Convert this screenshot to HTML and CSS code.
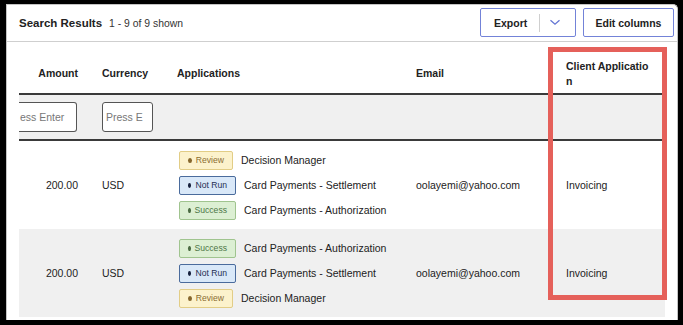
FILE: index.html
```html
<!DOCTYPE html>
<html>
<head>
<meta charset="utf-8">
<link rel="stylesheet" href="styles.css">
</head>
<body>
<div class="card">
  <div class="toolbar">
    <div class="title">
      <span class="title-main">Search Results</span>
      <span class="count">1 - 9 of 9 shown</span>
    </div>
    <div class="actions">
      <div class="btn btn-split">
        <span>Export</span>
        <span class="divider"></span>
        <svg class="chev" width="12" height="7" viewBox="0 0 12 7"><path d="M1.5 1.2 L6 5.2 L10.5 1.2" fill="none" stroke="#6476d4" stroke-width="1.3"/></svg>
      </div>
      <div class="btn btn-edit">Edit columns</div>
    </div>
  </div>
  <div class="table">
    <div class="row head">
      <div class="cell num">Amount</div>
      <div class="cell">Currency</div>
      <div class="cell">Applications</div>
      <div class="cell">Email</div>
      <div class="cell wrap">Client Application</div>
    </div>
    <div class="row filters">
      <div class="cell num"><div class="finput clipped"><span class="ftext">ess Enter</span></div></div>
      <div class="cell"><div class="finput"><span class="ftext">Press E</span></div></div>
      <div class="cell"></div>
      <div class="cell"></div>
      <div class="cell"></div>
    </div>
    <div class="row data">
      <div class="cell num">200.00</div>
      <div class="cell">USD</div>
      <div class="cell apps">
        <div class="app"><span class="badge review"><i></i>Review</span><span class="app-name">Decision Manager</span></div>
        <div class="app"><span class="badge notrun"><i></i>Not Run</span><span class="app-name">Card Payments - Settlement</span></div>
        <div class="app"><span class="badge success"><i></i>Success</span><span class="app-name">Card Payments - Authorization</span></div>
      </div>
      <div class="cell">oolayemi@yahoo.com</div>
      <div class="cell">Invoicing</div>
    </div>
    <div class="row data alt">
      <div class="cell num">200.00</div>
      <div class="cell">USD</div>
      <div class="cell apps">
        <div class="app"><span class="badge success"><i></i>Success</span><span class="app-name">Card Payments - Authorization</span></div>
        <div class="app"><span class="badge notrun"><i></i>Not Run</span><span class="app-name">Card Payments - Settlement</span></div>
        <div class="app"><span class="badge review"><i></i>Review</span><span class="app-name">Decision Manager</span></div>
      </div>
      <div class="cell">oolayemi@yahoo.com</div>
      <div class="cell">Invoicing</div>
    </div>
  </div>
  <div class="highlight"></div>
</div>
</body>
</html>
```

FILE: styles.css
```css
* { box-sizing: border-box; }
html, body { margin: 0; padding: 0; }
body {
  background: #000;
  width: 683px;
  height: 325px;
  overflow: hidden;
  padding: 4px 5px 0 6px;
  font-family: "Liberation Sans", Arial, sans-serif;
  color: #222;
}
.card {
  position: relative;
  background: #fff;
  height: 316px;
  border: 1px solid #c4c4c4;
  border-bottom: none;
  border-top-right-radius: 5px;
  overflow: hidden;
}
.toolbar {
  height: 37px;
  border-bottom: 1px solid #cfcfcf;
  display: flex;
  align-items: center;
  justify-content: space-between;
  padding: 0 3px 1px 12px;
}
.title { display: flex; align-items: baseline; gap: 7px; }
.title-main { font-weight: bold; font-size: 11.5px; }
.count { font-size: 10.4px; color: #333; }
.actions { display: flex; gap: 7px; }
.btn {
  height: 29px;
  border: 1px solid #7383d8;
  border-radius: 2px;
  background: #fff;
  font-weight: bold;
  font-size: 10.5px;
  display: flex;
  align-items: center;
}
.btn-split { width: 96px; padding-left: 13px; }
.divider { width: 1px; height: 18px; background: #cfcfcf; margin-left: 12px; }
.chev { margin-left: 9px; }
.btn-edit { width: 91px; justify-content: center; }

.table {
  margin-left: 12px;
  width: 646px;
  overflow: hidden;
}
.row {
  display: grid;
  grid-template-columns: 73px 75px 239px 150px 109px;
  align-items: center;
}
.cell { padding-left: 10px; font-size: 10.5px; }
.cell.num { padding-left: 0; padding-right: 14px; text-align: right; }
.head {
  height: 53px;
  padding-top: 12px;
  border-bottom: 2px solid #3a3a3a;
  font-weight: bold;
}
.head .cell { line-height: 15px; }
.head .wrap { width: 97px; word-break: break-all; }
.filters {
  height: 46px;
  background: #f0f0f0;
  border-bottom: 2px solid #3a3a3a;
  padding-bottom: 1px;
}
.filters .cell.num { padding-right: 15px; display: flex; justify-content: flex-end; }
.finput {
  height: 30px;
  width: 51px;
  border: 1px solid #555;
  border-radius: 3px;
  background: #fff;
  display: flex;
  align-items: center;
  padding-left: 3px;
  font-size: 10.5px;
  color: #777;
}
.finput.clipped {
  width: 58px;
  border-left: none;
  border-radius: 0 3px 3px 0;
  padding-left: 1px;
}
.ftext { white-space: nowrap; display: block; }

.data { height: 88px; }
.alt { background: #f0f0f0; }
.apps { display: flex; flex-direction: column; gap: 6px; padding-left: 12px; }
.app { display: flex; align-items: center; gap: 8px; white-space: nowrap; }
.badge {
  height: 19px;
  border: 1px solid;
  border-radius: 2px;
  font-size: 8.6px;
  display: flex;
  align-items: center;
  padding: 0 8px 0 8px;
}
.badge i {
  width: 5px; height: 5px; border-radius: 50%;
  margin-right: 4px;
  display: block;
}
.review { background: #fcf2cc; border-color: #e2cd86; color: #8a6d33; width: 54px; }
.review i { background: #86672c; }
.notrun { background: #d9e8f8; border-color: #4a6b9c; color: #1f2f52; width: 57px; }
.notrun i { background: #16203d; }
.success { background: #dcefd3; border-color: #a0c48f; color: #4d7646; width: 57px; }
.success i { background: #4b6b43; }

.highlight {
  position: absolute;
  left: 541px;
  top: 42px;
  width: 119px;
  height: 253px;
  border: 5px solid #e5605a;
}
```
